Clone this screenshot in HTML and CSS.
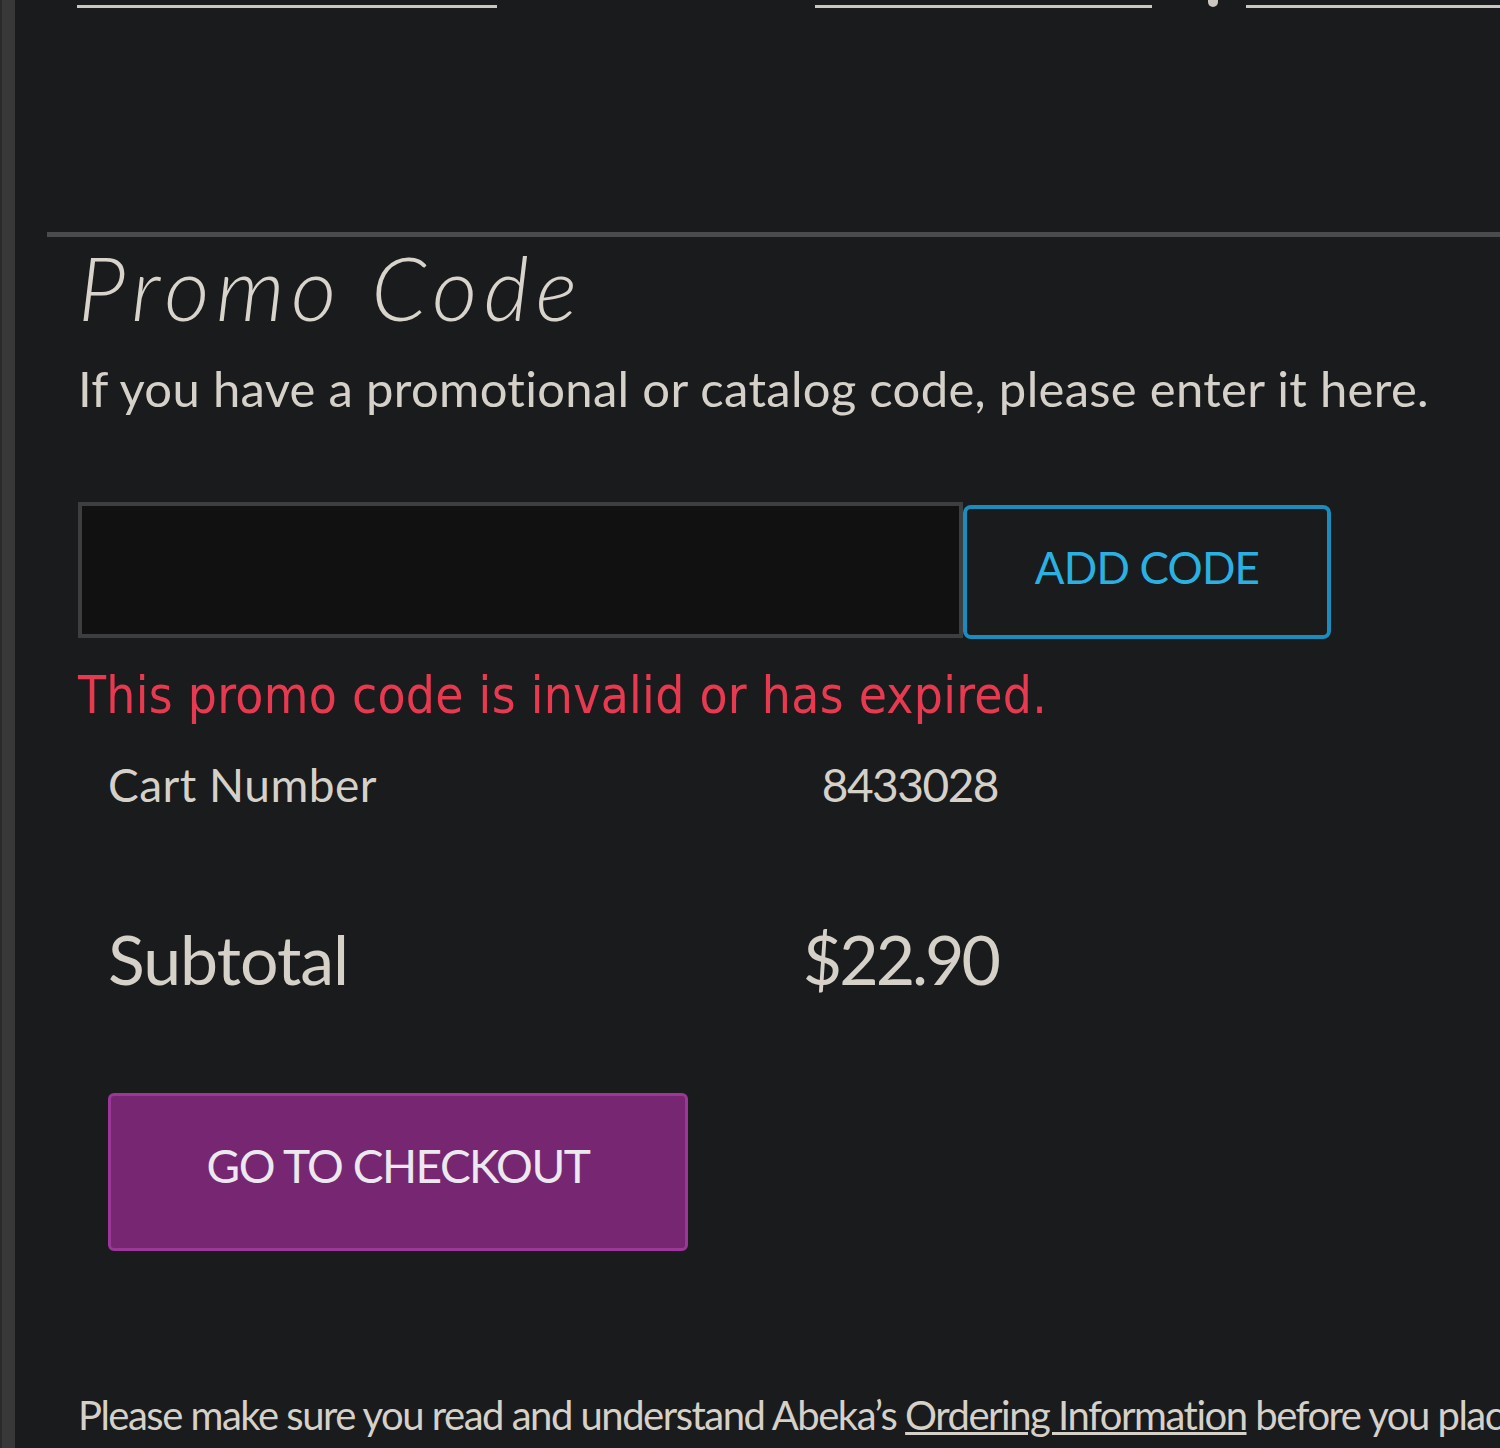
FILE: index.html
```html
<!DOCTYPE html>
<html lang="en">
<head>
<meta charset="utf-8">
<title>Promo Code</title>
<link rel="stylesheet" href="styles.css">
</head>
<body>
<div class="frame">
  <div class="edge"></div>
  <main class="main">
    <div class="toplinks">
      <span class="ul ul-1"></span>
      <span class="ul ul-2"></span>
      <span class="dot"></span>
      <span class="ul ul-3"></span>
    </div>
    <section class="promo">
      <h2 class="promo-title">Promo Code</h2>
      <p class="promo-intro">If you have a promotional or catalog code, please enter it here.</p>
      <div class="promo-form">
        <input class="promo-input" type="text" aria-label="Promo code">
        <button class="btn-add" type="button">ADD CODE</button>
      </div>
      <p class="promo-error">This promo code is invalid or has expired.</p>
      <div class="summary">
        <div class="row row-cart"><span>Cart Number</span><span class="num">8433028</span></div>
        <div class="row row-subtotal"><span>Subtotal</span><span class="amount">$22.90</span></div>
        <button class="btn-checkout" type="button">GO TO CHECKOUT</button>
      </div>
      <p class="notice">Please make sure you read and understand Abeka’s <a href="#">Ordering Information</a> before you place your order.</p>
    </section>
  </main>
</div>
</body>
</html>
```
FILE: styles.css
```css
html, body {
  margin: 0;
  padding: 0;
  background: #1a1b1d;
  height: 100%;
  overflow: hidden;
}
.frame {
  display: flex;
  min-height: 1448px;
  font-family: Lato, "Noto Sans", sans-serif;
  color: #d5d1c9;
}
.edge {
  width: 13px;
  flex: 0 0 13px;
  background: #383838;
  border-left: 2px solid #2a2a2a;
}
.main {
  flex: 1;
  min-width: 0;
  overflow: hidden;
}
.toplinks {
  display: flex;
  align-items: flex-start;
  height: 232px;
}
.ul {
  display: block;
  flex-shrink: 0;
  height: 3px;
  margin-top: 5px;
  background: #cbc7bf;
}
.ul-1 { margin-left: 62px; width: 420px; }
.ul-2 { margin-left: 318px; width: 337px; }
.dot {
  display: block;
  flex-shrink: 0;
  width: 10px;
  height: 7px;
  margin-left: 56px;
  border-radius: 0 0 5px 5px;
  background: #cbc7bf;
}
.ul-3 { margin-left: 28px; width: 300px; }
.promo {
  margin-left: 32px;
  border-top: 5px solid #4a4b4d;
  padding-left: 31px;
}
.promo-title {
  margin: 7px 0 0;
  font-size: 88px;
  line-height: 86px;
  font-style: italic;
  font-weight: 300;
  letter-spacing: 6.5px;
  color: #d8d4cc;
}
.promo-intro {
  margin: 34px 0 0;
  font-size: 49px;
  line-height: 49px;
  letter-spacing: 0.3px;
}
.promo-form {
  display: flex;
  align-items: flex-start;
  margin-top: 89px;
}
.promo-input {
  box-sizing: border-box;
  width: 885px;
  height: 136px;
  margin: 0;
  border: 4px solid #3d3e40;
  background: #111112;
}
.btn-add {
  box-sizing: border-box;
  width: 368px;
  height: 134px;
  margin: 3px 0 0;
  padding: 0 0 10px;
  border: 4px solid #1a8cbd;
  border-radius: 8px;
  background: transparent;
  color: #2bb0e2;
  font-family: Lato, "Noto Sans", sans-serif;
  font-size: 44px;
  letter-spacing: -0.8px;
}
.promo-error {
  margin: 31px 0 0;
  font-family: "DejaVu Sans Condensed", "DejaVu Sans", sans-serif;
  font-size: 51px;
  line-height: 51px;
  letter-spacing: 0.3px;
  color: #e7394f;
}
.summary {
  padding-left: 30px;
  width: 890px;
}
.row {
  display: flex;
  justify-content: space-between;
}
.row-cart {
  margin-top: 41px;
  font-size: 46px;
  line-height: 46px;
  letter-spacing: 0.5px;
}
.row-cart .num {
  letter-spacing: -1.5px;
}
.row-subtotal {
  margin-top: 116px;
  font-size: 68px;
  line-height: 70px;
  letter-spacing: -1px;
}
.row-subtotal .amount {
  letter-spacing: -3px;
}
.btn-checkout {
  display: block;
  box-sizing: border-box;
  width: 580px;
  height: 158px;
  margin-top: 99px;
  padding: 0 0 14px;
  border: 3px solid #9c3698;
  border-radius: 6px;
  background: #772671;
  color: #ece8f0;
  font-family: Lato, "Noto Sans", sans-serif;
  font-size: 46px;
  letter-spacing: -1.5px;
}
.notice {
  margin: 142px 0 0;
  font-size: 40px;
  line-height: 44px;
  letter-spacing: -1.5px;
  white-space: nowrap;
  color: #d5d1c9;
}
.notice a {
  color: #d5d1c9;
  text-decoration: underline;
  text-decoration-thickness: 3px;
}
```
